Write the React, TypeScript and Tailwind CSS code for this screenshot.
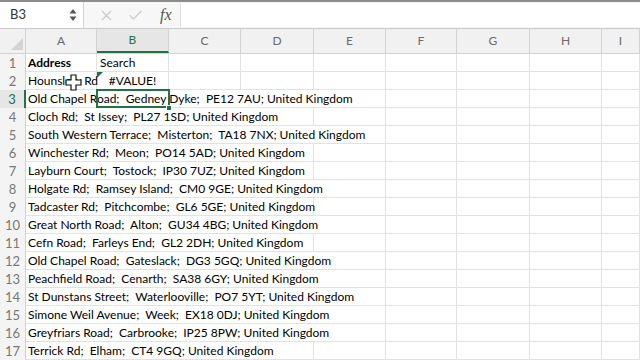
import { X, Check } from 'lucide-react';

type Row = { a: string; b?: string; span: number; bold?: boolean; err?: boolean };

const COLS = ['A', 'B', 'C', 'D', 'E', 'F', 'G', 'H', 'I'];

const ROWS: Row[] = [
  { a: 'Address', b: 'Search', span: 1, bold: true },
  { a: 'Hounslow Rd', b: '#VALUE!', span: 1, err: true },
  { a: 'Old Chapel Road;  Gedney Dyke;  PE12 7AU; United Kingdom', span: 5 },
  { a: 'Cloch Rd;  St Issey;  PL27 1SD; United Kingdom', span: 4 },
  { a: 'South Western Terrace;  Misterton;  TA18 7NX; United Kingdom', span: 5 },
  { a: 'Winchester Rd;  Meon;  PO14 5AD; United Kingdom', span: 4 },
  { a: 'Layburn Court;  Tostock;  IP30 7UZ; United Kingdom', span: 4 },
  { a: 'Holgate Rd;  Ramsey Island;  CM0 9GE; United Kingdom', span: 5 },
  { a: 'Tadcaster Rd;  Pitchcombe;  GL6 5GE; United Kingdom', span: 4 },
  { a: 'Great North Road;  Alton;  GU34 4BG; United Kingdom', span: 5 },
  { a: 'Cefn Road;  Farleys End;  GL2 2DH; United Kingdom', span: 4 },
  { a: 'Old Chapel Road;  Gateslack;  DG3 5GQ; United Kingdom', span: 5 },
  { a: 'Peachfield Road;  Cenarth;  SA38 6GY; United Kingdom', span: 5 },
  { a: 'St Dunstans Street;  Waterlooville;  PO7 5YT; United Kingdom', span: 5 },
  { a: 'Simone Weil Avenue;  Week;  EX18 0DJ; United Kingdom', span: 5 },
  { a: 'Greyfriars Road;  Carbrooke;  IP25 8PW; United Kingdom', span: 5 },
  { a: 'Terrick Rd;  Elham;  CT4 9GQ; United Kingdom', span: 4 },
];

const GRID = 'grid grid-cols-[26px_71px_72px_72px_73px_72px_71px_73px_72px_1fr]';
const CELL = 'border-r border-b border-[#e2e2e2] h-[18px] overflow-visible';

function SpinArrows() {
  return (
    <svg width="8" height="14" viewBox="0 0 8 14" className="text-[#555]">
      <path d="M4 1 L7.5 5.5 H0.5 Z" fill="currentColor" />
      <path d="M4 13 L7.5 8.5 H0.5 Z" fill="currentColor" />
    </svg>
  );
}

function CrossCursor() {
  return (
    <svg width="17" height="17" viewBox="0 0 17 17" className="absolute left-[65px] top-[20px]">
      <path
        d="M6 1 H11 V6 H16 V11 H11 V16 H6 V11 H1 V6 H6 Z"
        fill="#fff"
        stroke="#111"
        strokeWidth="1.2"
      />
    </svg>
  );
}

export default function App() {
  return (
    <div className="w-[640px] h-[360px] overflow-hidden bg-white font-['Lato','Liberation_Sans',sans-serif] text-black">
      {/* formula bar */}
      <div className="h-[29px] flex border-t-2 border-[#8c8c8c] border-b border-b-[#c9c9c9] bg-[#f7f7f7]">
        <div className="w-[84px] bg-white border-r border-[#d4d4d4] flex items-center justify-between pl-[10px] pr-[6px]">
          <span className="text-[13px] text-[#333]">B3</span>
          <SpinArrows />
        </div>
        <div className="w-[96px] flex items-center pl-[14px]">
          <X size={17} strokeWidth={1.5} className="text-[#c6c6c6]" />
          <Check size={17} strokeWidth={1.5} className="text-[#c6c6c6] ml-[12px]" />
          <span className="ml-[16px] text-[16px] italic text-[#555] font-['Liberation_Serif',serif]">fx</span>
        </div>
        <div className="flex-1 bg-white border-l border-[#e0e0e0] my-[1px]" />
      </div>

      {/* column headers */}
      <div className={`${GRID} h-[25px] bg-[#f1f1f1] border-b border-[#d2d2d2]`}>
        <div className="relative border-r border-[#d2d2d2]">
          <svg width="12" height="12" viewBox="0 0 12 12" className="absolute right-[2px] bottom-[3px]">
            <path d="M12 0 V12 H0 Z" fill="#d3d3d3" />
          </svg>
        </div>
        {COLS.map((c) => (
          <div
            key={c}
            className={
              c === 'B'
                ? 'flex items-center justify-center border-r border-[#d2d2d2] border-b-2 border-b-[#217346] text-[12px] text-[#217346] bg-[#e6e6e6]'
                : 'flex items-center justify-center border-r border-[#d2d2d2] text-[12px] text-[#6a6a6a]'
            }
          >
            {c}
          </div>
        ))}
      </div>

      {/* sheet body */}
      <div className="relative">
        {ROWS.map((r, i) => {
          const n = i + 1;
          const rest = COLS.length - r.span - (r.b !== undefined ? 1 : 0);
          return (
            <div key={n} className={`${GRID} h-[18px] text-[12px] leading-[18px]`}>
              <div
                className={
                  n === 3
                    ? 'bg-[#e6e6e6] border-r-2 border-[#217346] border-b border-b-[#e2e2e2] text-center text-[13px] text-[#217346]'
                    : 'bg-[#f4f4f4] border-r border-[#d2d2d2] border-b border-b-[#e2e2e2] text-center text-[13px] text-[#777]'
                }
              >
                {n}
              </div>
              <div
                className={`${CELL} ${r.span === 5 ? 'col-span-5' : r.span === 4 ? 'col-span-4' : ''} pl-[2px] whitespace-pre ${r.bold ? 'font-bold' : ''}`}
              >
                {r.a}
              </div>
              {r.b !== undefined && (
                <div className={`${CELL} relative whitespace-pre ${r.err ? 'text-center' : 'pl-[3px]'}`}>
                  {r.err && (
                    <svg width="6" height="6" viewBox="0 0 6 6" className="absolute left-0 top-0">
                      <path d="M0 0 H6 L0 6 Z" fill="#217346" />
                    </svg>
                  )}
                  {r.b}
                </div>
              )}
              {Array.from({ length: rest }).map((_, k) => (
                <div key={k} className={CELL} />
              ))}
            </div>
          );
        })}

        {/* active cell B3 */}
        <div className="absolute left-[96px] top-[35px] w-[74px] h-[19px] border-2 border-[#217346]" />
        <div className="absolute left-[166px] top-[51px] w-[6px] h-[6px] bg-[#217346] border border-white" />

        <CrossCursor />
      </div>
    </div>
  );
}
